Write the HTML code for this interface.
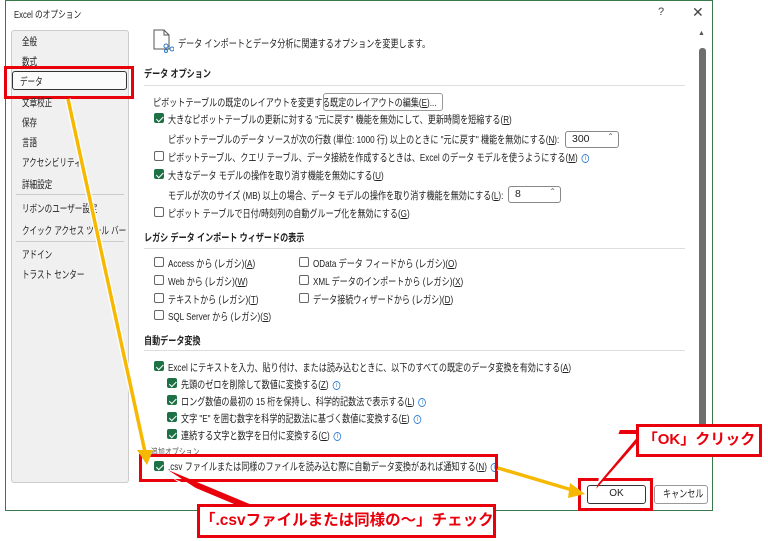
<!DOCTYPE html>
<html><head><meta charset="utf-8"><style>
*{margin:0;padding:0;box-sizing:border-box}
body{width:768px;height:541px;background:#fff;position:relative;overflow:hidden;font-family:"Liberation Sans","Noto Sans CJK JP",sans-serif;font-size:10.5px;color:#222}
.a{position:absolute;white-space:nowrap}
.t{transform:scaleX(.77);transform-origin:0 0}
.n{transform:scaleX(.72);transform-origin:0 0}
.dlg{position:absolute;left:5px;top:0;width:708px;height:511px;border:1px solid #3a7a4a;background:#fff}
.nav{position:absolute;left:11px;top:30px;width:118px;height:453px;background:#f0f0f0;border:1px solid #ccc;border-radius:3px}
.cb{position:absolute;width:10px;height:10px;border:1px solid #666;border-radius:2px;background:#fff}
.ck{background:#1e7145;border-color:#1e7145}
.ck::after{content:"";position:absolute;left:2.5px;top:0.5px;width:3px;height:5.5px;border:solid #fff;border-width:0 1.5px 1.5px 0;transform:rotate(45deg)}
.hr{position:absolute;height:1px;background:#ddd;left:144px;width:541px}
.h{font-weight:bold;font-size:10.5px}
.sp{position:absolute;border:1px solid #888;border-radius:3px;height:17px;background:#fff;font-size:10.5px;padding:1px 6px}
.sp::after{content:"⌃";position:absolute;right:4px;top:0;font-size:8px;color:#666}
.info{display:inline-block;width:10px;height:9px;border:1px solid #2a7ad0;border-radius:50%;margin-left:5px;vertical-align:1px;font-size:7px;line-height:7px;text-align:center;color:#2a7ad0}
.red{position:absolute;border:3px solid #e8000b}
u{text-decoration:underline}
</style></head><body>
<div class="dlg"></div>
<div class="a t" style="left:14px;top:6px;font-size:10px">Excel のオプション</div>
<div class="a" style="left:658px;top:6px;font-size:11px;color:#444">?</div>
<div class="a" style="left:692px;top:4px;font-size:14px;color:#444">✕</div>
<div class="nav"></div>
<div class="a n" style="left:22px;top:34px">全般</div>
<div class="a n" style="left:22px;top:54px">数式</div>
<div class="a" style="left:12px;top:71px;width:115px;height:19px;border:1.5px solid #333;border-radius:3px;background:#fafafa"></div>
<div class="a n" style="left:20px;top:74px">データ</div>
<div class="red" style="left:4px;top:66px;width:130px;height:33px"></div>
<div class="a n" style="left:22px;top:95px">文章校正</div>
<div class="a n" style="left:22px;top:115px">保存</div>
<div class="a n" style="left:22px;top:135px">言語</div>
<div class="a n" style="left:22px;top:155px">アクセシビリティ</div>
<div class="a n" style="left:22px;top:177px">詳細設定</div>
<div class="a" style="left:16px;top:194px;width:108px;height:1px;background:#ccc"></div>
<div class="a n" style="left:22px;top:201px">リボンのユーザー設定</div>
<div class="a n" style="left:22px;top:223px">クイック アクセス ツール バー</div>
<div class="a" style="left:16px;top:241px;width:108px;height:1px;background:#ccc"></div>
<div class="a n" style="left:22px;top:247px">アドイン</div>
<div class="a n" style="left:22px;top:267px">トラスト センター</div>

<svg class="a" style="left:152px;top:29px" width="22" height="24"><path d="M2 1h10l5 5v14H2z" fill="#fff" stroke="#555"/><path d="M12 1v5h5" fill="none" stroke="#555"/><circle cx="14" cy="17" r="2" fill="#fff" stroke="#2a7ad0"/><circle cx="20" cy="20" r="2" fill="#fff" stroke="#2a7ad0"/><circle cx="14" cy="22" r="1.5" fill="#fff" stroke="#2a7ad0"/></svg>
<div class="a t" style="left:178px;top:36px">データ インポートとデータ分析に関連するオプションを変更します。</div>

<div class="a h t" style="left:144px;top:66px">データ オプション</div>
<div class="hr" style="top:85px"></div>
<div class="a t" style="left:153px;top:95px">ピボットテーブルの既定のレイアウトを変更する:</div>
<div class="a" style="left:323px;top:93px;width:120px;height:18px;border:1px solid #999;border-radius:3px;padding:1px 6px"><div class="t">既定のレイアウトの編集(<u>E</u>)...</div></div>
<div class="cb ck" style="left:154px;top:113px"></div><div class="a t" style="left:168px;top:112px">大きなピボットテーブルの更新に対する "元に戻す" 機能を無効にして、更新時間を短縮する(<u>R</u>)</div>
<div class="a t" style="left:168px;top:132px">ピボットテーブルのデータ ソースが次の行数 (単位: 1000 行) 以上のときに "元に戻す" 機能を無効にする(<u>N</u>):</div>
<div class="sp" style="left:565px;top:131px;width:54px">300</div>
<div class="cb" style="left:154px;top:151px"></div><div class="a t" style="left:168px;top:150px">ピボットテーブル、クエリ テーブル、データ接続を作成するときは、Excel のデータ モデルを使うようにする(<u>M</u>)<span class="info">i</span></div>
<div class="cb ck" style="left:154px;top:169px"></div><div class="a t" style="left:168px;top:168px">大きなデータ モデルの操作を取り消す機能を無効にする(<u>U</u>)</div>
<div class="a t" style="left:168px;top:188px">モデルが次のサイズ (MB) 以上の場合、データ モデルの操作を取り消す機能を無効にする(<u>L</u>):</div>
<div class="sp" style="left:508px;top:186px;width:53px">8</div>
<div class="cb" style="left:154px;top:207px"></div><div class="a t" style="left:168px;top:206px">ピボット テーブルで日付/時刻列の自動グループ化を無効にする(<u>G</u>)</div>

<div class="a h t" style="left:144px;top:230px">レガシ データ インポート ウィザードの表示</div>
<div class="hr" style="top:248px"></div>
<div class="cb" style="left:154px;top:257px"></div><div class="a t" style="left:168px;top:256px">Access から (レガシ)(<u>A</u>)</div>
<div class="cb" style="left:154px;top:275px"></div><div class="a t" style="left:168px;top:274px">Web から (レガシ)(<u>W</u>)</div>
<div class="cb" style="left:154px;top:293px"></div><div class="a t" style="left:168px;top:292px">テキストから (レガシ)(<u>T</u>)</div>
<div class="cb" style="left:154px;top:310px"></div><div class="a t" style="left:168px;top:309px">SQL Server から (レガシ)(<u>S</u>)</div>
<div class="cb" style="left:299px;top:257px"></div><div class="a t" style="left:313px;top:256px">OData データ フィードから (レガシ)(<u>O</u>)</div>
<div class="cb" style="left:299px;top:275px"></div><div class="a t" style="left:313px;top:274px">XML データのインポートから (レガシ)(<u>X</u>)</div>
<div class="cb" style="left:299px;top:293px"></div><div class="a t" style="left:313px;top:292px">データ接続ウィザードから (レガシ)(<u>D</u>)</div>

<div class="a h t" style="left:144px;top:333px">自動データ変換</div>
<div class="hr" style="top:350px"></div>
<div class="cb ck" style="left:154px;top:361px"></div><div class="a t" style="left:168px;top:360px">Excel にテキストを入力、貼り付け、または読み込むときに、以下のすべての既定のデータ変換を有効にする(<u>A</u>)</div>
<div class="cb ck" style="left:167px;top:378px"></div><div class="a t" style="left:181px;top:377px">先頭のゼロを削除して数値に変換する(<u>Z</u>)<span class="info">i</span></div>
<div class="cb ck" style="left:167px;top:395px"></div><div class="a t" style="left:181px;top:394px">ロング数値の最初の 15 桁を保持し、科学的記数法で表示する(<u>L</u>)<span class="info">i</span></div>
<div class="cb ck" style="left:167px;top:412px"></div><div class="a t" style="left:181px;top:411px">文字 "E" を囲む数字を科学的記数法に基づく数値に変換する(<u>E</u>)<span class="info">i</span></div>
<div class="cb ck" style="left:167px;top:429px"></div><div class="a t" style="left:181px;top:428px">連続する文字と数字を日付に変換する(<u>C</u>)<span class="info">i</span></div>
<div class="a t" style="left:151px;top:445px;font-size:9px;color:#555">追加オプション</div>
<div class="a" style="left:143px;top:458px;width:352px;height:21px;background:#fff"></div>
<div class="cb ck" style="left:154px;top:461px"></div><div class="a t" style="left:168px;top:459px">.csv ファイルまたは同様のファイルを読み込む際に自動データ変換があれば通知する(<u>N</u>)<span class="info">i</span></div>
<div class="red" style="left:139px;top:454px;width:359px;height:28px"></div>

<div class="a" style="left:698px;top:30px;font-size:7px;color:#555">▲</div>
<div class="a" style="left:699px;top:48px;width:7px;height:390px;background:#6e6e6e;border-radius:3px"></div>
<div class="a" style="left:698px;top:441px;font-size:7px;color:#555">▼</div>

<div class="a" style="left:587px;top:485px;width:59px;height:19px;border:1.5px solid #333;border-radius:3px;text-align:center;line-height:16px;font-size:10px">OK</div>
<div class="a" style="left:654px;top:485px;width:54px;height:19px;border:1px solid #999;border-radius:3px;line-height:17px;padding-left:8px"><div class="t">キャンセル</div></div>
<div class="red" style="left:578px;top:478px;width:75px;height:33px"></div>

<svg class="a" style="left:0;top:0" width="768" height="541">
<g stroke="#fff" stroke-width="6" fill="none"><line x1="68" y1="99" x2="146" y2="457"/><line x1="498" y1="468" x2="578" y2="492"/></g>
<g stroke="#f6b800" stroke-width="3.5" fill="none"><line x1="68" y1="99" x2="145" y2="452"/><line x1="498" y1="468" x2="572" y2="490"/></g>
<polygon points="137,450 153,450 147,465" fill="#f6b800"/>
<polygon points="570,483 585,494 568,498" fill="#f6b800"/>
<polygon points="620,430 648,430 596,489" fill="#e8000b"/>
<polygon points="604,434 640,434 598,484" fill="#fff"/>
<polygon points="168,470 222,505 252,505" fill="#e8000b"/>
<polygon points="172,478 220,509 246,509" fill="#fff"/>
</svg>
<div class="a" style="left:636px;top:424px;width:126px;height:33px;border:3px solid #e8000b;background:#fff;color:#e8000b;font-weight:bold;font-size:15px;text-align:center;line-height:26px">「OK」クリック</div>
<div class="a" style="left:197px;top:504px;width:299px;height:34px;border:3px solid #e8000b;background:#fff;color:#e8000b;font-weight:bold;font-size:15.5px;text-align:center;line-height:27px">「.csvファイルまたは同様の～」チェック</div>
</body></html>
